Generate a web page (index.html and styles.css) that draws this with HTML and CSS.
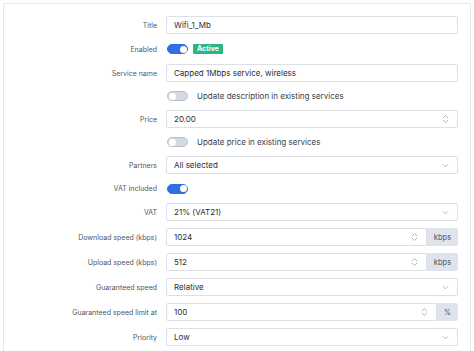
FILE: index.html
```html
<!DOCTYPE html>
<html>
<head>
<meta charset="utf-8">
<link rel="stylesheet" href="styles.css">
</head>
<body>
<div class="card">
  <form class="form">
    <label class="lbl">Title</label>
    <div class="field"><span class="val">Wifi_1_Mb</span></div>

    <label class="lbl">Enabled</label>
    <div class="ctl"><span class="tog on"></span><span class="badge">Active</span></div>

    <label class="lbl">Service name</label>
    <div class="field"><span class="val">Capped 1Mbps service, wireless</span></div>

    <span class="lbl"></span>
    <div class="ctl tr"><span class="tog"></span><span class="txt">Update description in existing services</span></div>

    <label class="lbl">Price</label>
    <div class="field"><span class="val">20.00</span><span class="spin"><svg viewBox="0 0 8 10"><path d="M1 4 L4 1 L7 4 M1 6 L4 9 L7 6"/></svg></span></div>

    <span class="lbl"></span>
    <div class="ctl tr"><span class="tog"></span><span class="txt">Update price in existing services</span></div>

    <label class="lbl">Partners</label>
    <div class="field"><span class="val">All selected</span><span class="chev"><svg viewBox="0 0 8 5"><path d="M1 1 L4 4 L7 1"/></svg></span></div>

    <label class="lbl">VAT included</label>
    <div class="ctl tv"><span class="tog on"></span></div>

    <label class="lbl">VAT</label>
    <div class="field"><span class="val">21% (VAT21)</span><span class="chev"><svg viewBox="0 0 8 5"><path d="M1 1 L4 4 L7 1"/></svg></span></div>

    <label class="lbl">Download speed (kbps)</label>
    <div class="group"><div class="field"><span class="val">1024</span><span class="spin"><svg viewBox="0 0 8 10"><path d="M1 4 L4 1 L7 4 M1 6 L4 9 L7 6"/></svg></span></div><span class="addon">kbps</span></div>

    <label class="lbl">Upload speed (kbps)</label>
    <div class="group"><div class="field"><span class="val">512</span><span class="spin"><svg viewBox="0 0 8 10"><path d="M1 4 L4 1 L7 4 M1 6 L4 9 L7 6"/></svg></span></div><span class="addon">kbps</span></div>

    <label class="lbl">Guaranteed speed</label>
    <div class="field"><span class="val">Relative</span><span class="chev"><svg viewBox="0 0 8 5"><path d="M1 1 L4 4 L7 1"/></svg></span></div>

    <label class="lbl">Guaranteed speed limit at</label>
    <div class="group"><div class="field"><span class="val">100</span><span class="spin"><svg viewBox="0 0 8 10"><path d="M1 4 L4 1 L7 4 M1 6 L4 9 L7 6"/></svg></span></div><span class="addon pct">%</span></div>

    <label class="lbl">Priority</label>
    <div class="field"><span class="val">Low</span><span class="chev"><svg viewBox="0 0 8 5"><path d="M1 1 L4 4 L7 1"/></svg></span></div>
  </form>
</div>
</body>
</html>
```
FILE: styles.css
```css
html, body {
  margin: 0;
  padding: 0;
  background: #ffffff;
  font-family: Inter, "Noto Sans", sans-serif;
  overflow: hidden;
  height: 351px;
}
.card {
  margin: 3px 3px 0 3px;
  height: 348px;
  border: 1px solid #e6e7ea;
  border-bottom: none;
  border-radius: 2px 2px 0 0;
  box-sizing: border-box;
  padding: 12px 12px 0 0;
  overflow: hidden;
}
.form {
  display: grid;
  grid-template-columns: 153px 1fr;
  column-gap: 9px;
  row-gap: 7px;
  align-items: center;
}
.lbl {
  text-align: right;
  font-size: 7px;
  color: #50555e;
  white-space: nowrap;
}
.field {
  height: 18px;
  box-sizing: border-box;
  border: 1px solid #dcdfe4;
  border-radius: 2px;
  display: flex;
  align-items: center;
  padding: 0 7px 0 7px;
  background: #fff;
  flex: 1;
  min-width: 0;
}
.val {
  flex: 1;
  font-size: 8px;
  color: #2b2e33;
  white-space: nowrap;
}
.chev svg {
  display: block;
  width: 7px;
  height: 5px;
  fill: none;
  stroke: #9aa0a8;
  stroke-width: 0.9;
}
.chev { margin-right: 1px; }
.spin svg {
  display: block;
  width: 7px;
  height: 10px;
  fill: none;
  stroke: #9aa0a8;
  stroke-width: 0.9;
}
.spin { margin-right: 1px; }
.group {
  display: flex;
  height: 18px;
}
.group .field {
  border-radius: 2px 0 0 2px;
}
.addon {
  width: 31px;
  box-sizing: border-box;
  background: #dfe4ec;
  color: #4a505a;
  font-size: 7.5px;
  display: flex;
  align-items: center;
  justify-content: center;
  border-radius: 0 2px 2px 0;
}
.addon.pct {
  width: 21px;
  font-size: 7px;
}
.ctl {
  display: flex;
  align-items: center;
  height: 16px;
}
.ctl.tr { height: 14px; }
.ctl.tv { height: 15px; }
.tog {
  width: 21px;
  height: 10px;
  box-sizing: border-box;
  border-radius: 5px;
  background: #d4dae2;
  border: 1px solid #b9c1cc;
  position: relative;
  margin-left: 1px;
  flex: none;
}
.tog::after {
  content: "";
  position: absolute;
  top: 0.5px;
  left: 0.5px;
  width: 7px;
  height: 7px;
  border-radius: 50%;
  background: #fff;
}
.tog.on {
  background: #2f6fe4;
  border-color: #2f6fe4;
}
.tog.on::after {
  left: auto;
  right: 0.5px;
}
.badge {
  margin-left: 5px;
  background: #2bb583;
  color: #fff;
  font-size: 7px;
  font-weight: 700;
  height: 10px;
  line-height: 10px;
  padding: 0 4px;
  border-radius: 1px;
}
.txt {
  margin-left: 9px;
  font-size: 8px;
  color: #3c4047;
  white-space: nowrap;
}
```
